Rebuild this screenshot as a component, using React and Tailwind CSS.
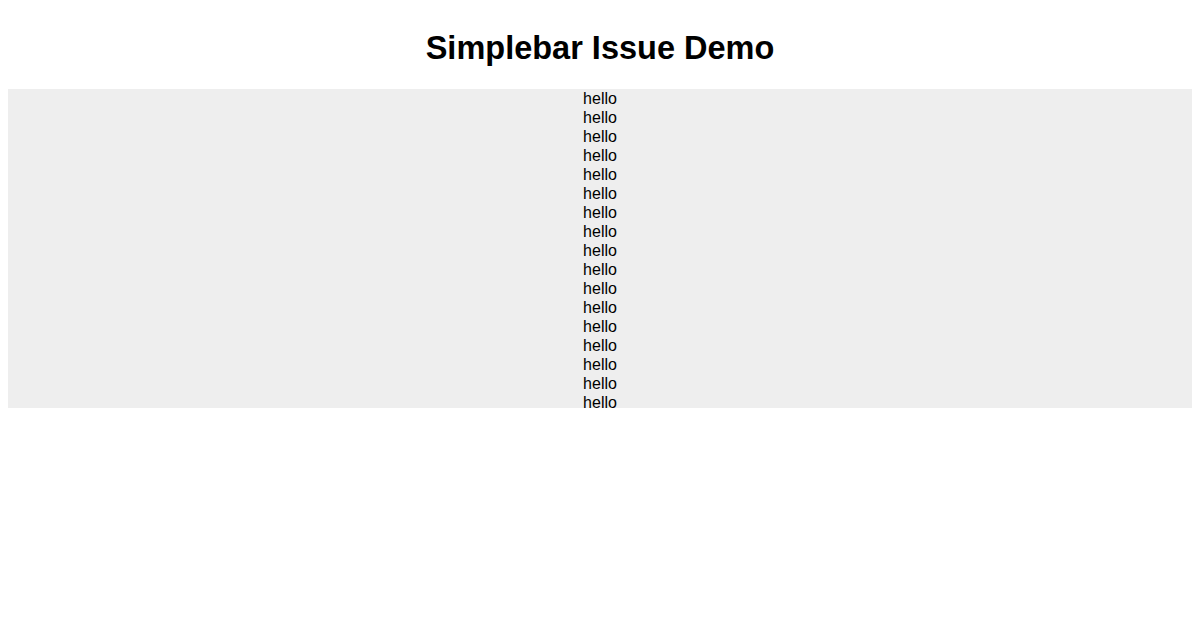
export default function App() {
  const items = Array.from({ length: 17 }, (_, i) => i);

  return (
    <div className="min-h-[630px] bg-white p-2 text-center text-black font-['Liberation_Sans',Arial,sans-serif]">
      <h1 className="my-[22px] text-[32.5px] font-bold leading-[37px]">Simplebar Issue Demo</h1>
      <div className="h-[319px] overflow-hidden bg-[#eeeeee] text-base leading-[19px]">
        {items.map((i) => (
          <div key={i}>hello</div>
        ))}
      </div>
    </div>
  );
}
